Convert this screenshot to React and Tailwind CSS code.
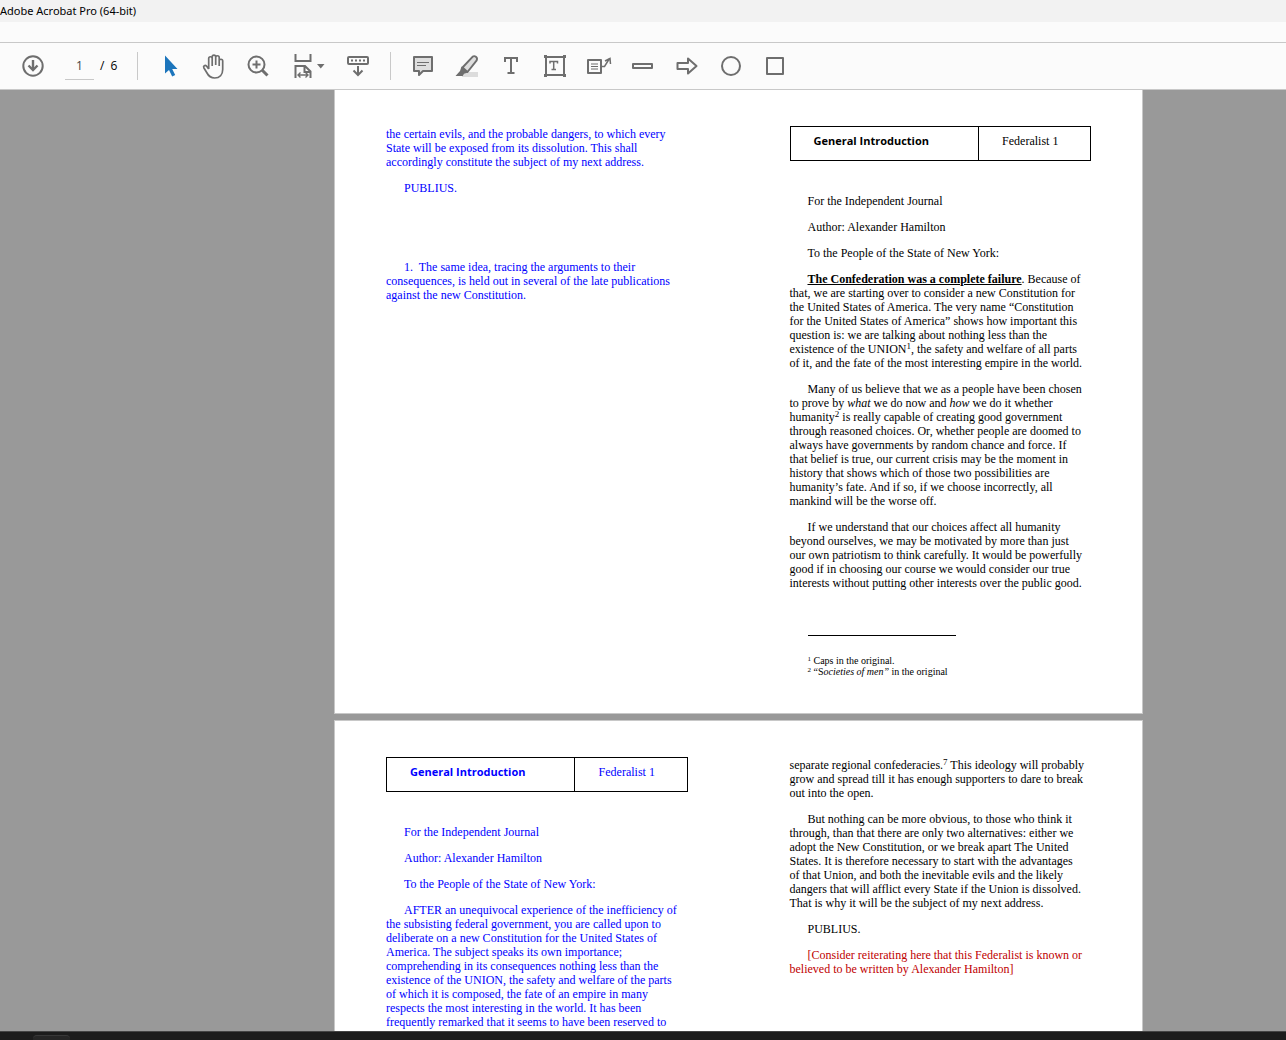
import { clsx } from 'clsx';

const G = '#6e6e6e';

function ToolButton({ label, className, children }) {
  return (
    <button type="button" aria-label={label} title={label} className={clsx('flex h-8 w-8 shrink-0 items-center justify-center', className)}>
      {children}
    </button>
  );
}

function Icon({ width = 28, children }) {
  return (
    <svg width={width} height="28" viewBox={`0 0 ${width} 28`} fill="none" stroke={G} strokeWidth="2" className="shrink-0">
      {children}
    </svg>
  );
}

function Divider({ className }) {
  return <div className={clsx('h-7 w-px shrink-0 bg-[#c9c9c9]', className)} />;
}

function Toolbar() {
  return (
    <div role="toolbar" className="flex h-[47px] shrink-0 items-center border-b border-[#c8c8c8] bg-[#fbfbfb] pl-[17px] text-[#6e6e6e]">
      <ToolButton label="Next page">
        <Icon>
          <circle cx="14" cy="14" r="9.700" />
          <path d="M14 8v10" strokeWidth="2.400" />
          <path d="M9.500 13.500L14 18l4.500-4.500" strokeWidth="2.400" />
        </Icon>
      </ToolButton>
      <div className="ml-4 flex items-center font-['Open_Sans',sans-serif] text-xs text-black">
        <input
          aria-label="Page number"
          defaultValue="1"
          className="h-7 w-[29px] border-b border-[#c8c8c8] bg-transparent text-center text-[#444]"
        />
        <span className="ml-[6px]">/</span>
        <span className="ml-[6px]">6</span>
      </div>
      <Divider className="ml-5" />
      <ToolButton label="Select" className="ml-4">
        <Icon>
          <path d="M9 3.500v18l4-3.600 3.200 6.600 3-1.400-3-6.100h5.300z" fill="#1c75bc" stroke="none" />
        </Icon>
      </ToolButton>
      <ToolButton label="Hand" className="ml-3">
        <Icon>
          <path
            d="M8.700 17V6.500a1.700 1.700 0 013.500 0V14M12.200 13V4.800a1.700 1.700 0 013.500 0V13M15.700 13V5.500a1.700 1.700 0 013.500 0V14M19.200 14V9a1.700 1.700 0 013.500 0v8.500c0 5-3 8.500-8 8.500-4.500 0-6.500-2.500-8-5.500l-2.900-4.800c-.800-1.600 1.300-3.100 2.700-1.600l2.200 2.900"
            strokeWidth="1.700"
            strokeLinejoin="round"
          />
        </Icon>
      </ToolButton>
      <ToolButton label="Zoom in" className="ml-3">
        <Icon>
          <circle cx="12.500" cy="12.500" r="8" />
          <path d="M12.500 8.500v8M8.500 12.500h8" />
          <path d="M18 18l5.500 5.500" strokeWidth="3" />
        </Icon>
      </ToolButton>
      <ToolButton label="Fit width" className="ml-4 w-9">
        <Icon width={36}>
          <path d="M5.500 2v7h15V2" />
          <path d="M5.500 26V14h9.500l5.500 5.500V26M14.500 14v6h6" />
          <path d="M8 23h10M10.500 20.500L8 23l2.500 2.500M15.500 20.500L18 23l-2.500 2.500" strokeWidth="1.400" />
          <path d="M27 12h7.500l-3.700 4.500z" fill={G} stroke="none" />
        </Icon>
      </ToolButton>
      <ToolButton label="Read mode" className="ml-4">
        <Icon>
          <rect x="4" y="5" width="20" height="7" rx="1" />
          <path d="M7 8.500h14" strokeDasharray="2 2" />
          <path d="M14 14v9M9.500 18.500L14 23l4.500-4.500" />
        </Icon>
      </ToolButton>
      <Divider className="ml-4" />
      <div className="ml-4 flex gap-3">
        <ToolButton label="Add sticky note">
          <Icon>
            <path d="M5 5h18v14h-9l-4 4v-4H5z" fill="#dedede" strokeLinejoin="round" />
            <path d="M8 10.500h12M8 13.500h9" strokeWidth="1.200" />
          </Icon>
        </ToolButton>
        <ToolButton label="Highlight">
          <Icon>
            <path d="M9 20h16v5H9z" fill="#dcdcdc" stroke="none" />
            <path d="M9.500 15.500L19.500 4.800c2.200-1.800 5.500.700 4.200 3.500L14.500 20z" fill="#dedede" strokeWidth="1.900" strokeLinejoin="round" />
            <path d="M8.500 14.500l6.500 6-4 1.200-1.300 2.300H2.500l4.500-5z" fill={G} stroke="none" />
          </Icon>
        </ToolButton>
        <ToolButton label="Add text">
          <Icon>
            <path d="M8 10V6h12v4M14 6v15M10.500 21h7" />
          </Icon>
        </ToolButton>
        <ToolButton label="Text box">
          <Icon>
            <path d="M5 5h18v18H5z" />
            <path d="M9 11.500V9.500h7.500v2M12.700 9.500v8M10.500 17.500H15" strokeWidth="1.500" />
            <path d="M3 3h3v3H3zM22 3h3v3h-3zM3 22h3v3H3zM22 22h3v3h-3z" fill={G} stroke="none" />
          </Icon>
        </ToolButton>
        <ToolButton label="Text callout">
          <Icon>
            <path d="M3 8h13v13H3z" strokeLinejoin="round" />
            <path d="M6 12h7M6 14.500h7M6 17h7" strokeWidth="1.200" />
            <path d="M17 14.500h2.500l5-8M20 9l5-2.500.500 5.500" strokeWidth="1.500" />
          </Icon>
        </ToolButton>
        <ToolButton label="Line">
          <Icon>
            <path d="M4 12h19v4H4z" strokeLinejoin="round" />
          </Icon>
        </ToolButton>
        <ToolButton label="Arrow">
          <Icon>
            <path d="M4.500 11H15V6.500l8.500 7.500-8.500 7.500V17H4.500z" strokeLinejoin="round" />
          </Icon>
        </ToolButton>
        <ToolButton label="Oval">
          <Icon>
            <circle cx="14" cy="14" r="9" />
          </Icon>
        </ToolButton>
        <ToolButton label="Rectangle">
          <Icon>
            <path d="M6 6h16v16H6z" strokeLinejoin="round" />
          </Icon>
        </ToolButton>
      </div>
    </div>
  );
}

// Keeps the printed line breaks of the document
function Lines({ lines, indent = true, className }) {
  return (
    <p className={clsx('whitespace-nowrap', indent && 'indent-[18px]', className)}>
      {lines.map((line, i) => (
        <span key={i}>
          {line}
          {i < lines.length - 1 && <br />}
        </span>
      ))}
    </p>
  );
}

function Chapter() {
  return (
    <table className="mb-[21px] h-[35px] w-full border-collapse text-left">
      <tbody>
        <tr>
          <th className="w-[188px] border border-black pb-1.5 pl-[23px] font-['Open_Sans',sans-serif] text-[11px] font-bold">
            General Introduction
          </th>
          <td className="border border-black pr-2 pb-1.5 text-center text-xs">Federalist 1</td>
        </tr>
      </tbody>
    </table>
  );
}

function Page({ children, className }) {
  return (
    <section
      className={clsx(
        "mx-auto grid w-full max-w-[809px] shrink-0 grid-cols-2 gap-[102px] border border-[#c8c8c8] bg-white px-[51px] pt-9 pb-9 font-['Liberation_Serif',serif] text-xs leading-[14px] text-black",
        className
      )}
    >
      {children}
    </section>
  );
}

function Ref({ children }) {
  return <sup className="text-[9px]">{children}</sup>;
}

const heading = ['For the Independent Journal', 'Author: Alexander Hamilton', 'To the People of the State of New York:'];

export default function App() {
  return (
    <div className="flex h-screen flex-col overflow-hidden bg-[#999]">
      <header className="flex h-[22px] shrink-0 items-center bg-[#f2f2f2] font-['Noto_Sans',sans-serif] text-[11px] text-black">
        <h1>Adobe Acrobat Pro (64-bit)</h1>
      </header>
      <div className="h-[21px] shrink-0 border-b border-[#c8c8c8] bg-[#fbfbfb]" />
      <Toolbar />

      <main className="flex min-h-0 flex-1 flex-col gap-[6px] overflow-hidden pl-[191px]">
        <Page className="border-t-0">
          <div className="flex flex-col gap-3 pt-px text-[#0000ff]">
            <Lines
              indent={false}
              lines={[
                'the certain evils, and the probable dangers, to which every',
                'State will be exposed from its dissolution. This shall',
                'accordingly constitute the subject of my next address.',
              ]}
            />
            <Lines lines={['PUBLIUS.']} />
            <Lines
              className="mt-[53px]"
              lines={[
                '1.\u00a0 The same idea, tracing the arguments to their',
                'consequences, is held out in several of the late publications',
                'against the new Constitution.',
              ]}
            />
          </div>
          <div className="flex flex-col gap-3">
            <Chapter />
            {heading.map((line) => (
              <Lines key={line} lines={[line]} />
            ))}
            <Lines
              lines={[
                <><b className="underline">The Confederation was a complete failure</b>. Because of</>,
                'that, we are starting over to consider a new Constitution for',
                'the United States of America. The very name “Constitution',
                'for the United States of America” shows how important this',
                'question is: we are talking about nothing less than the',
                <>existence of the UNION<Ref>1</Ref>, the safety and welfare of all parts</>,
                'of it, and the fate of the most interesting empire in the world.',
              ]}
            />
            <Lines
              lines={[
                'Many of us believe that we as a people have been chosen',
                <>to prove by <i>what</i> we do now and <i>how</i> we do it whether</>,
                <>humanity<Ref>2</Ref> is really capable of creating good government</>,
                'through reasoned choices. Or, whether people are doomed to',
                'always have governments by random chance and force. If',
                'that belief is true, our current crisis may be the moment in',
                'history that shows which of those two possibilities are',
                'humanity’s fate. And if so, if we choose incorrectly, all',
                'mankind will be the worse off.',
              ]}
            />
            <Lines
              lines={[
                'If we understand that our choices affect all humanity',
                'beyond ourselves, we may be motivated by more than just',
                'our own patriotism to think carefully. It would be powerfully',
                'good if in choosing our course we would consider our true',
                'interests without putting other interests over the public good.',
              ]}
            />
            <footer className="mt-[33px] ml-[18px] text-[10px] leading-[11px]">
              <hr className="mb-[19px] w-[148px] border-black" />
              <p><sup className="text-[7px]">1</sup> Caps in the original.</p>
              <p><sup className="text-[7px]">2</sup> “S<i>ocieties of men”</i> in the original</p>
            </footer>
          </div>
        </Page>

        <Page>
          <div className="flex flex-col gap-3 text-[#0000ff]">
            <Chapter />
            {heading.map((line) => (
              <Lines key={line} lines={[line]} />
            ))}
            <Lines
              lines={[
                'AFTER an unequivocal experience of the inefficiency of',
                'the subsisting federal government, you are called upon to',
                'deliberate on a new Constitution for the United States of',
                'America. The subject speaks its own importance;',
                'comprehending in its consequences nothing less than the',
                'existence of the UNION, the safety and welfare of the parts',
                'of which it is composed, the fate of an empire in many',
                'respects the most interesting in the world. It has been',
                'frequently remarked that it seems to have been reserved to',
              ]}
            />
          </div>
          <div className="flex flex-col gap-3 pt-px">
            <Lines
              indent={false}
              lines={[
                <>separate regional confederacies.<Ref>7</Ref> This ideology will probably</>,
                'grow and spread till it has enough supporters to dare to break',
                'out into the open.',
              ]}
            />
            <Lines
              lines={[
                'But nothing can be more obvious, to those who think it',
                'through, than that there are only two alternatives: either we',
                'adopt the New Constitution, or we break apart The United',
                'States. It is therefore necessary to start with the advantages',
                'of that Union, and both the inevitable evils and the likely',
                'dangers that will afflict every State if the Union is dissolved.',
                'That is why it will be the subject of my next address.',
              ]}
            />
            <Lines lines={['PUBLIUS.']} />
            <Lines
              className="text-[#c00000]"
              lines={[
                '[Consider reiterating here that this Federalist is known or',
                'believed to be written by Alexander Hamilton]',
              ]}
            />
          </div>
        </Page>
      </main>

      <footer className="flex h-[9px] shrink-0 items-end border-t border-[#444] bg-[#1c1c1c] pl-[33px]">
        <div className="h-[5px] w-[37px] rounded-t-sm border-t border-[#383838] bg-[#262626]" />
      </footer>
    </div>
  );
}
